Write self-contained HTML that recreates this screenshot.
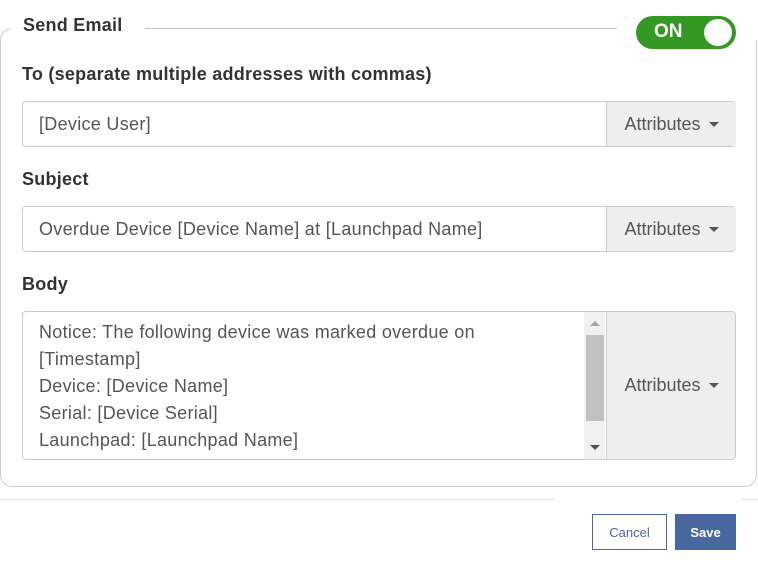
<!DOCTYPE html><html><head><style>
body{margin:0;width:758px;height:574px;background:#fff;font-family:"Liberation Sans",Arial,sans-serif;position:relative;overflow:hidden;color:#333}
.abs{position:absolute}
.fs{left:0;top:28px;width:757px;height:459px;border:1px solid #ccc;border-radius:12px;box-sizing:border-box}
.lbl{font-weight:bold;font-size:18px;color:#333;letter-spacing:0.25px}
.inp{border:1px solid #ccc;border-radius:4px;box-sizing:border-box;background:#fff;font-size:18px;color:#555;letter-spacing:0.3px}
.btn{background:#eee;border-left:1px solid #ccc;border-radius:0 3px 3px 0;font-size:18px;color:#555;display:flex;align-items:center;justify-content:center;letter-spacing:0}
.car{display:inline-block;width:0;height:0;border-left:5px solid transparent;border-right:5px solid transparent;border-top:5px solid #555;margin-left:8px;vertical-align:middle}
</style></head><body>
<div class="abs fs"></div>
<div class="abs" style="left:10px;top:20px;width:135px;height:16px;background:#fff"></div>
<div class="abs" style="left:617px;top:18px;width:140px;height:22px;background:#fff"></div>
<div class="abs lbl" style="left:23px;top:15px">Send Email</div>
<div class="abs" style="left:636px;top:16px;width:100px;height:33px;border-radius:17px;background:#339922"></div>
<div class="abs" style="left:654px;top:21px;color:#fff;font-weight:bold;font-size:19px">ON</div>
<div class="abs" style="left:704px;top:19px;width:28px;height:27px;border-radius:50%;background:#fff"></div>
<div class="abs lbl" style="left:22px;top:64px">To (separate multiple addresses with commas)</div>
<div class="abs inp" style="left:22px;top:101px;width:714px;height:46px"><div class="abs" style="left:16px;top:12px">[Device User]</div><div class="abs btn" style="left:583px;top:0;width:129px;height:44px">Attributes<span class="car"></span></div></div>
<div class="abs lbl" style="left:22px;top:169px">Subject</div>
<div class="abs inp" style="left:22px;top:206px;width:714px;height:46px"><div class="abs" style="left:16px;top:12px">Overdue Device [Device Name] at [Launchpad Name]</div><div class="abs btn" style="left:583px;top:0;width:129px;height:44px">Attributes<span class="car"></span></div></div>
<div class="abs lbl" style="left:22px;top:274px">Body</div>
<div class="abs inp" style="left:22px;top:311px;width:714px;height:149px;overflow:hidden"><div class="abs" style="left:16px;top:7px;line-height:27px;white-space:nowrap">Notice: The following device was marked overdue on<br>[Timestamp]<br>Device: [Device Name]<br>Serial: [Device Serial]<br>Launchpad: [Launchpad Name]<br>User: [Device User]</div>
<div class="abs" style="left:561px;top:0;width:21px;height:147px;background:#f1f1f1"></div>
<div class="abs" style="left:563px;top:23px;width:18px;height:86px;background:#c1c1c1"></div>
<div class="abs" style="left:567px;top:9px;border-left:5px solid transparent;border-right:5px solid transparent;border-bottom:5px solid #a3a3a3"></div>
<div class="abs" style="left:567px;top:133px;border-left:5px solid transparent;border-right:5px solid transparent;border-top:5px solid #505050"></div>
<div class="abs btn" style="left:583px;top:0;width:129px;height:147px">Attributes<span class="car"></span></div></div>
<div class="abs" style="left:0;top:499px;width:557px;height:1px;background:#e5e5e5"></div>
<div class="abs" style="left:739px;top:499px;width:19px;height:1px;background:#e5e5e5"></div>
<div class="abs" style="left:592px;top:514px;width:75px;height:36px;border:1px solid #4a68a0;box-sizing:border-box;color:#4a68a0;font-size:13px;display:flex;align-items:center;justify-content:center">Cancel</div>
<div class="abs" style="left:675px;top:514px;width:61px;height:36px;background:#4a68a0;color:#fff;font-size:13px;font-weight:bold;display:flex;align-items:center;justify-content:center">Save</div>
</body></html>
